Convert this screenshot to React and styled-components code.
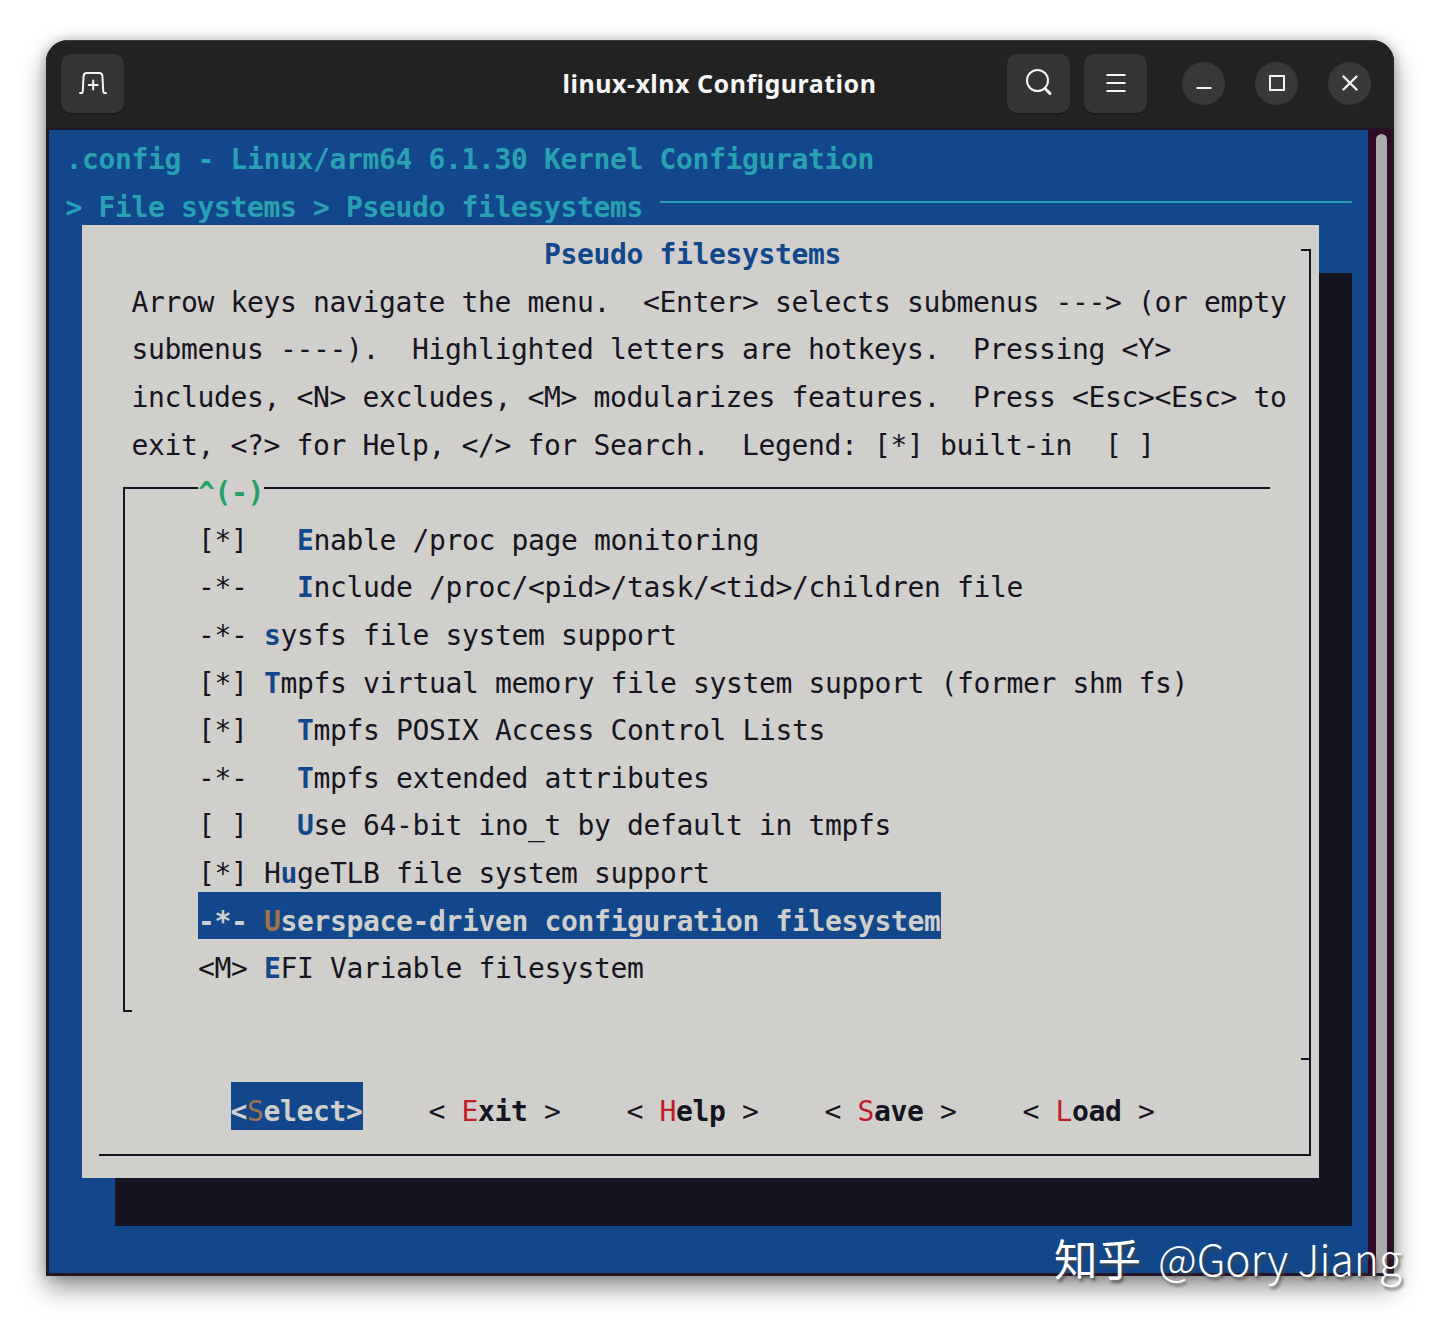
import React from 'react';
import styled, { createGlobalStyle } from 'styled-components';

const CELL = 16.5;
const ROW = 47.6;
const NUDGE = 6;

const Global = createGlobalStyle`
  html, body { margin: 0; padding: 0; background: #fff; }
  * { box-sizing: border-box; }
`;

const Page = styled.div`
  width: 1440px;
  height: 1328px;
  padding: 40px 46px 0;
  position: relative;
  overflow: hidden;
  background: #fff;
`;

const Win = styled.div`
  width: 1348px;
  height: 1236px;
  border-radius: 22px 22px 0 0;
  background: #241528;
  box-shadow: 0 12px 26px rgba(0, 0, 0, 0.42), 0 0 12px rgba(0, 0, 0, 0.22);
  display: flex;
  flex-direction: column;
  overflow: hidden;
`;

const TitleBar = styled.header`
  height: 88px;
  flex: none;
  background: #222222;
  box-shadow: inset 0 1px 0 rgba(255, 255, 255, 0.12);
  display: grid;
  grid-template-columns: 1fr auto 1fr;
  align-items: center;
  padding: 0 16px 2px 15px;
`;

const TitleLeft = styled.div`
  display: flex;
`;

const TitleRight = styled.div`
  display: flex;
  justify-content: flex-end;
  align-items: center;
  padding-right: 7px;
`;

const Title = styled.div`
  text-align: center;
  color: #f6f6f6;
  font: 700 25px 'Noto Sans', sans-serif;
  letter-spacing: 0.5px;
`;

const ToolButton = styled.div`
  width: 63px;
  height: 59px;
  border-radius: 10px;
  background: #353535;
  box-shadow: 0 1px 1px rgba(0, 0, 0, 0.35);
  display: flex;
  align-items: center;
  justify-content: center;
  flex: none;
  margin-right: ${p => p.$mr || 0}px;
`;

const RoundButton = styled.div`
  width: 43px;
  height: 43px;
  border-radius: 50%;
  background: #393939;
  display: flex;
  align-items: center;
  justify-content: center;
  flex: none;
  margin-right: ${p => p.$mr || 0}px;
`;

const Body = styled.div`
  flex: 1;
  display: flex;
  padding: 2px 3px 3px 3px;
  min-height: 0;
`;

const Terminal = styled.main`
  width: 1319px;
  height: 1143px;
  flex: none;
  background: #12488b;
  font: 400 28px 'DejaVu Sans Mono', 'Liberation Mono', monospace;
  letter-spacing: -0.357px;
  color: #171421;
  overflow: hidden;
`;

const Gutter = styled.div`
  flex: 1;
  background: #300a24;
  padding: 4px 4px 0 8px;
  display: flex;
`;

const Thumb = styled.div`
  width: 11px;
  background: #ababab;
  border-radius: 6px 6px 0 0;
`;

const Line = styled.div`
  height: ${ROW}px;
  line-height: ${ROW}px;
  white-space: pre;
  padding-left: ${p => (p.$col || 0) * CELL}px;
  padding-top: ${NUDGE}px;
`;

const CyanLine = styled(Line)`
  color: #2aa1b3;
  font-weight: 700;
  display: flex;
`;

const Rule = styled.span`
  flex: none;
  width: 692px;
  height: 2px;
  margin: 17px 0 0 17px;
  background: #2aa1b3;
`;

const Dialog = styled.section`
  margin-left: 33px;
  width: 1237px;
  height: 953px;
  background: #d0cfcc;
  box-shadow: 33px 48px 0 #171421;
  position: relative;
`;

const Frame = styled.div`
  position: absolute;
  left: 17px;
  top: 24px;
  width: 1212px;
  height: 907px;
  border-right: 2px solid #171421;
  border-bottom: 2px solid #171421;
  pointer-events: none;

  &::before, &::after {
    content: '';
    position: absolute;
    right: 0;
    width: 8px;
    height: 2px;
    background: #171421;
  }
  &::before { top: 0; }
  &::after { top: 809px; }
`;

const DialogTitle = styled(Line)`
  color: #12488b;
  font-weight: 700;
`;

const MenuBox = styled.div`
  margin: ${ROW / 2}px 0 0 41px;
  width: 1147px;
  height: 525px;
  border-top: 2px solid #171421;
  border-left: 2px solid #171421;
  padding-left: 73px;
  position: relative;

  &::after {
    content: '';
    position: absolute;
    left: -2px;
    bottom: 0;
    width: 9px;
    height: 2px;
    background: #171421;
  }
`;

const MenuRows = styled.div`
  margin-top: -${ROW / 2 + 2}px;
`;

const Legend = styled(Line)`
  color: #26a269;
  font-weight: 700;
`;

const LegendText = styled.span`
  display: inline-block;
  height: ${ROW}px;
  background: linear-gradient(#d0cfcc, #d0cfcc) 0 16px / 100% 6px no-repeat;
`;

const Hot = styled.b`
  color: ${p => p.$color || '#12488b'};
  font-weight: ${p => p.$weight || 700};
`;

const Selected = styled.span`
  display: inline-block;
  height: ${ROW}px;
  margin-top: -${NUDGE}px;
  padding-top: ${NUDGE}px;
  background: #12488b;
  color: #d0cfcc;
  font-weight: 700;
`;

const ButtonRow = styled.div`
  display: flex;
  gap: ${CELL * 4}px;
  padding-left: ${CELL * 9}px;
  margin-top: ${ROW * 1.5 - 1}px;
`;

const Btn = styled.span`
  width: ${CELL * 8}px;
  height: ${ROW}px;
  line-height: ${ROW}px;
  padding-top: ${NUDGE}px;
  white-space: pre;
  font-weight: 700;
  flex: none;
`;

const SelectBtn = styled(Btn)`
  background: #12488b;
  color: #d0cfcc;
`;

const Thin = styled.span`
  font-weight: 400;
`;

const Watermark = styled.div`
  position: absolute;
  left: 1054px;
  top: 1226px;
  color: #fff;
  display: flex;
  align-items: baseline;
  gap: 17px;
  font-family: 'Noto Sans CJK SC', 'Noto Sans', sans-serif;
  white-space: pre;
  text-shadow: 2px 3px 3px rgba(70, 70, 70, 0.75);
`;

const WatermarkMark = styled.span`
  font-size: 43.5px;
`;

const WatermarkName = styled.span`
  font-size: 42.5px;
  font-weight: 300;
`;

const stroke = { fill: 'none', stroke: '#f4f4f4', strokeLinecap: 'round' };

const NewTabIcon = () => (
  <svg width="30" height="24" viewBox="0 0 30 24" {...stroke} strokeWidth="2">
    <path d="M2 22h1.6Q4.6 22 4.7 21L5.6 5Q5.8 2 8.8 2h12.4Q24.2 2 24.4 5L25.3 21Q25.4 22 26.4 22H28" strokeLinejoin="round" />
    <path d="M15.2 9.5v9M10.7 14h9" />
  </svg>
);
const SearchIcon = () => (
  <svg width="30" height="30" viewBox="0 0 30 30" {...stroke} strokeWidth="2">
    <circle cx="13.5" cy="12.5" r="10.5" />
    <path d="M21 20.5 26 25.5" strokeWidth="3" />
  </svg>
);
const MenuIcon = () => (
  <svg width="22" height="20" viewBox="0 0 22 20" {...stroke} strokeWidth="2" strokeLinecap="butt">
    <path d="M1.5 2h19M1.5 10h19M1.5 18h19" />
  </svg>
);
const MinIcon = () => (
  <svg width="18" height="18" viewBox="0 0 18 18" {...stroke} strokeWidth="2" strokeLinecap="butt">
    <path d="M1.5 14h15" />
  </svg>
);
const MaxIcon = () => (
  <svg width="18" height="18" viewBox="0 0 18 18" {...stroke} strokeWidth="2">
    <rect x="2" y="2" width="14" height="14" />
  </svg>
);
const CloseIcon = () => (
  <svg width="18" height="18" viewBox="0 0 18 18" {...stroke} strokeWidth="2.4">
    <path d="M2.5 2.5l13 13M15.5 2.5l-13 13" />
  </svg>
);

const help = [
  'Arrow keys navigate the menu.  <Enter> selects submenus ---> (or empty',
  'submenus ----).  Highlighted letters are hotkeys.  Pressing <Y>',
  'includes, <N> excludes, <M> modularizes features.  Press <Esc><Esc> to',
  'exit, <?> for Help, </> for Search.  Legend: [*] built-in  [ ]',
];

const items = [
  ['[*]   ', 'E', 'nable /proc page monitoring'],
  ['-*-   ', 'I', 'nclude /proc/<pid>/task/<tid>/children file'],
  ['-*- ', 's', 'ysfs file system support'],
  ['[*] ', 'T', 'mpfs virtual memory file system support (former shm fs)'],
  ['[*]   ', 'T', 'mpfs POSIX Access Control Lists'],
  ['-*-   ', 'T', 'mpfs extended attributes'],
  ['[ ]   ', 'U', 'se 64-bit ino_t by default in tmpfs'],
  ['[*] H', 'u', 'geTLB file system support'],
];

const buttons = [
  ['E', 'xit'],
  ['H', 'elp'],
  ['S', 'ave'],
  ['L', 'oad'],
];

export default function App() {
  return (
    <Page>
      <Global />
      <Win>
        <TitleBar>
          <TitleLeft>
            <ToolButton><NewTabIcon /></ToolButton>
          </TitleLeft>
          <Title>linux-xlnx Configuration</Title>
          <TitleRight>
            <ToolButton $mr={14}><SearchIcon /></ToolButton>
            <ToolButton $mr={35}><MenuIcon /></ToolButton>
            <RoundButton $mr={30}><MinIcon /></RoundButton>
            <RoundButton $mr={30}><MaxIcon /></RoundButton>
            <RoundButton><CloseIcon /></RoundButton>
          </TitleRight>
        </TitleBar>
        <Body>
          <Terminal>
            <CyanLine $col={1}>.config - Linux/arm64 6.1.30 Kernel Configuration</CyanLine>
            <CyanLine $col={1}>{'> File systems > Pseudo filesystems'}<Rule /></CyanLine>
            <Dialog>
              <Frame />
              <DialogTitle $col={28}>Pseudo filesystems</DialogTitle>
              {help.map(t => <Line key={t} $col={3}>{t}</Line>)}
              <MenuBox>
                <MenuRows>
                  <Legend><LegendText>^(-)</LegendText></Legend>
                  {items.map(([pre, hot, rest]) => (
                    <Line key={rest}>{pre}<Hot>{hot}</Hot>{rest}</Line>
                  ))}
                  <Line><Selected>-*- <Hot $color="#a2734c">U</Hot>serspace-driven configuration filesystem</Selected></Line>
                  <Line>{'<M> '}<Hot>E</Hot>FI Variable filesystem</Line>
                </MenuRows>
              </MenuBox>
              <ButtonRow>
                <SelectBtn>{'<'}<Hot $color="#a2734c" $weight={400}>S</Hot>{'elect>'}</SelectBtn>
                {buttons.map(([hot, rest]) => (
                  <Btn key={hot}><Thin>{'< '}</Thin><Hot $color="#c01c28" $weight={400}>{hot}</Hot>{rest}<Thin>{' >'}</Thin></Btn>
                ))}
              </ButtonRow>
            </Dialog>
          </Terminal>
          <Gutter><Thumb /></Gutter>
        </Body>
      </Win>
      <Watermark><WatermarkMark>知乎</WatermarkMark><WatermarkName>@Gory Jiang</WatermarkName></Watermark>
    </Page>
  );
}
